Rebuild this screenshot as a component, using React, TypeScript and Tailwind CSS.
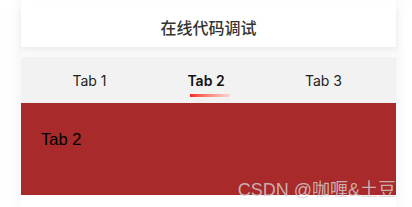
import React from "react";

export default function App() {
  return (
    <div className="w-[412px] h-[207px] bg-white overflow-hidden relative" style={{ fontFamily: '"Noto Sans", "Noto Sans CJK SC", sans-serif' }}>
      <div className="absolute left-[21px] top-0 w-[375px] h-[207px] shadow-[0_0_14px_rgba(200,210,230,0.35)]"></div>
      <div className="relative ml-[21px] w-[375px] flex flex-col">
        <div className="h-[7px] bg-white"></div>
        <div className="h-[40px] bg-white flex items-center justify-center relative z-10 shadow-[0_3px_6px_rgba(0,0,0,0.06)]">
          <span className="text-[16px] font-medium text-[#333]" style={{ fontFamily: '"Noto Sans CJK SC", sans-serif' }}>在线代码调试</span>
        </div>
        <div className="h-[10px] bg-[#fafafa]"></div>
        <div className="h-[46px] bg-[#f2f2f2] flex items-center text-[14px] text-[#222]" style={{ fontFamily: 'Inter, "Noto Sans", sans-serif' }}>
          <div className="flex-1 flex justify-center pl-[10px]">Tab 1</div>
          <div className="flex-1 flex justify-center relative">
            <span className="font-semibold text-[#111] -ml-[1px]">Tab 2</span>
            <div className="absolute left-[42px] top-[24px] w-[40px] h-[3px] bg-gradient-to-r from-[#f3201e] to-[#f6d6d6]"></div>
          </div>
          <div className="flex-1 flex justify-center pr-[14px]">Tab 3</div>
        </div>
        <div className="h-[92px] bg-[#a82a2a] relative">
          <div className="absolute left-[20px] top-[24px] text-[16.5px] text-black" style={{ fontFamily: '"Liberation Sans", Arial, sans-serif' }}>Tab 2</div>
          <div className="absolute right-0 bottom-[-4px] text-[18px] text-[rgba(215,210,210,0.8)] leading-none whitespace-nowrap" style={{ fontFamily: '"Liberation Sans", "Noto Sans CJK SC", sans-serif' }}>CSDN @咖喱&amp;土豆</div>
        </div>
        <div className="h-[12px] bg-white"></div>
      </div>
    </div>
  );
}
